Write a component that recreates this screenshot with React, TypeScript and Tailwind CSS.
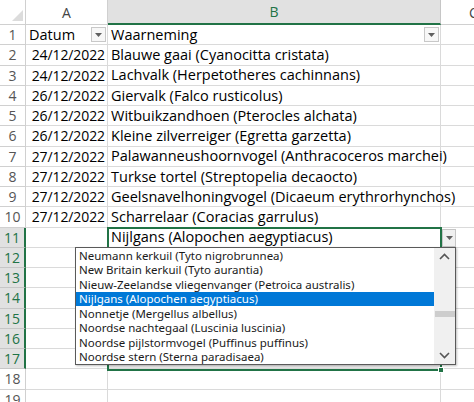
import React from 'react';

const cellFont = { fontFamily: '"Open Sans", "Noto Sans", sans-serif' };
const listFont = { fontFamily: '"Noto Sans", "Open Sans", sans-serif' };

const rows: { n: number; date: string; text: string }[] = [
  { n: 1, date: 'Datum', text: 'Waarneming' },
  { n: 2, date: '24/12/2022', text: 'Blauwe gaai (Cyanocitta cristata)' },
  { n: 3, date: '24/12/2022', text: 'Lachvalk (Herpetotheres cachinnans)' },
  { n: 4, date: '26/12/2022', text: 'Giervalk (Falco rusticolus)' },
  { n: 5, date: '26/12/2022', text: 'Witbuikzandhoen (Pterocles alchata)' },
  { n: 6, date: '26/12/2022', text: 'Kleine zilverreiger (Egretta garzetta)' },
  { n: 7, date: '27/12/2022', text: 'Palawanneushoornvogel (Anthracoceros marchei)' },
  { n: 8, date: '27/12/2022', text: 'Turkse tortel (Streptopelia decaocto)' },
  { n: 9, date: '27/12/2022', text: 'Geelsnavelhoningvogel (Dicaeum erythrorhynchos)' },
  { n: 10, date: '27/12/2022', text: 'Scharrelaar (Coracias garrulus)' },
  { n: 11, date: '', text: 'Nijlgans (Alopochen aegyptiacus)' },
  { n: 12, date: '', text: '' },
  { n: 13, date: '', text: '' },
  { n: 14, date: '', text: '' },
  { n: 15, date: '', text: '' },
  { n: 16, date: '', text: '' },
  { n: 17, date: '', text: '' },
  { n: 18, date: '', text: '' },
  { n: 19, date: '', text: '' },
];

const options = [
  'Neumann kerkuil (Tyto nigrobrunnea)',
  'New Britain kerkuil (Tyto aurantia)',
  'Nieuw-Zeelandse vliegenvanger (Petroica australis)',
  'Nijlgans (Alopochen aegyptiacus)',
  'Nonnetje (Mergellus albellus)',
  'Noordse nachtegaal (Luscinia luscinia)',
  'Noordse pijlstormvogel (Puffinus puffinus)',
  'Noordse stern (Sterna paradisaea)',
];

// tiny down triangle used on filter / validation buttons
const Caret = () => (
  <svg width="7" height="4" viewBox="0 0 7 4">
    <polygon points="0,0 7,0 3.5,4" fill="#5f5f5f" />
  </svg>
);

const FilterButton = () => (
  <div className="w-[15px] h-[15px] shrink-0 border border-[#c8c8c8] bg-[#f7f7f7] flex items-center justify-center">
    <Caret />
  </div>
);

const App: React.FC = () => {
  return (
    <div className="relative w-[474px] h-[402px] overflow-hidden bg-white text-[#1f1f1f]" style={cellFont}>
      {/* Column headers */}
      <div className="flex h-[25px]">
        <div className="w-[26px] shrink-0 border-r border-b border-[#d0d0d0] bg-white flex items-end justify-end pr-[2px] pb-[3px]">
          <svg width="11" height="11" viewBox="0 0 11 11">
            <polygon points="11,0 11,11 0,11" fill="#dcdcdc" />
          </svg>
        </div>
        <div className="w-[82px] shrink-0 border-r border-b border-[#d0d0d0] bg-white flex items-center justify-center text-[14px] text-[#444]">
          A
        </div>
        <div className="w-[333px] shrink-0 border-r border-[#c6c6c6] border-b-2 border-b-[#217346] bg-[#e1e1e1] flex items-center justify-center text-[14px] text-[#217346]">
          B
        </div>
        <div className="flex-1 border-b border-[#d0d0d0] bg-white flex items-center pl-[28px] text-[14px] text-[#444]">
          C
        </div>
      </div>

      {/* Rows */}
      {rows.map((r) => {
        const sel = r.n >= 11 && r.n <= 17;
        return (
          <div key={r.n} className="flex h-[20.25px]">
            <div
              className={
                sel
                  ? 'w-[26px] shrink-0 border-b border-[#c6c6c6] border-r-2 border-r-[#217346] bg-[#e1e1e1] flex items-center justify-center text-[14px] text-[#217346]'
                  : 'w-[26px] shrink-0 border-r border-b border-[#d0d0d0] bg-white flex items-center justify-center text-[14px] text-[#555]'
              }
            >
              {r.n}
            </div>
            <div
              className={
                'w-[82px] shrink-0 border-r border-b border-[#dadada] flex items-center text-black ' +
                (r.n === 1 ? 'justify-between pl-[3px] pr-[1px] text-[14.5px]' : 'justify-end pr-[2px] text-[14px] tracking-[-0.1px]')
              }
            >
              <span className="whitespace-nowrap">{r.date}</span>
              {r.n === 1 && <FilterButton />}
            </div>
            <div
              className={
                'w-[333px] shrink-0 border-r border-b border-[#dadada] flex items-center text-[14.5px] text-black ' +
                (r.n === 1 ? 'justify-between pl-[3px] pr-[1px]' : 'pl-[3px]') +
                (sel && r.n > 11 ? ' bg-[#e6e6e6]' : '')
              }
            >
              <span className="whitespace-nowrap">{r.text}</span>
              {r.n === 1 && <FilterButton />}
            </div>
            <div className="flex-1 border-b border-[#dadada]" />
          </div>
        );
      })}

      {/* Selection outline B11:B17 */}
      <div className="absolute left-[107px] top-[227px] w-[335px] h-[144px] border-2 border-[#217346] pointer-events-none" />
      <div className="absolute left-[438px] top-[367px] w-[6px] h-[6px] bg-[#217346] border border-white" />

      {/* Validation dropdown button next to B11 */}
      <div className="absolute left-[442px] top-[229px] w-[14px] h-[18px] bg-[#f0f0f0] border border-[#c6c6c6] flex items-center justify-center">
        <Caret />
      </div>

      {/* Validation list */}
      <div
        className="absolute left-[75px] top-[247px] w-[381px] h-[118px] bg-white border border-[#5a5a5a] shadow-[1px_1px_2px_rgba(0,0,0,0.25)] flex"
        style={listFont}
      >
        <div className="flex-1 flex flex-col">
          {options.map((o, i) => (
            <div
              key={o}
              className={
                'h-[14.5px] flex items-center pl-[3px] text-[11.5px] leading-none whitespace-nowrap ' +
                (i === 3 ? 'bg-[#0078d7] text-white' : 'text-[#1a1a1a]')
              }
            >
              {o}
            </div>
          ))}
        </div>
        <div className="w-[21px] bg-[#f0f0f0] flex flex-col items-center justify-between py-[5px] relative">
          <svg width="11" height="7" viewBox="0 0 11 7">
            <polyline points="1,6 5.5,1.5 10,6" fill="none" stroke="#555" strokeWidth="1.6" />
          </svg>
          <div className="absolute left-[1px] right-0 top-[63px] h-[6px] bg-[#cdcdcd]" />
          <svg width="11" height="7" viewBox="0 0 11 7">
            <polyline points="1,1 5.5,5.5 10,1" fill="none" stroke="#555" strokeWidth="1.6" />
          </svg>
        </div>
      </div>
    </div>
  );
};

export default App;
